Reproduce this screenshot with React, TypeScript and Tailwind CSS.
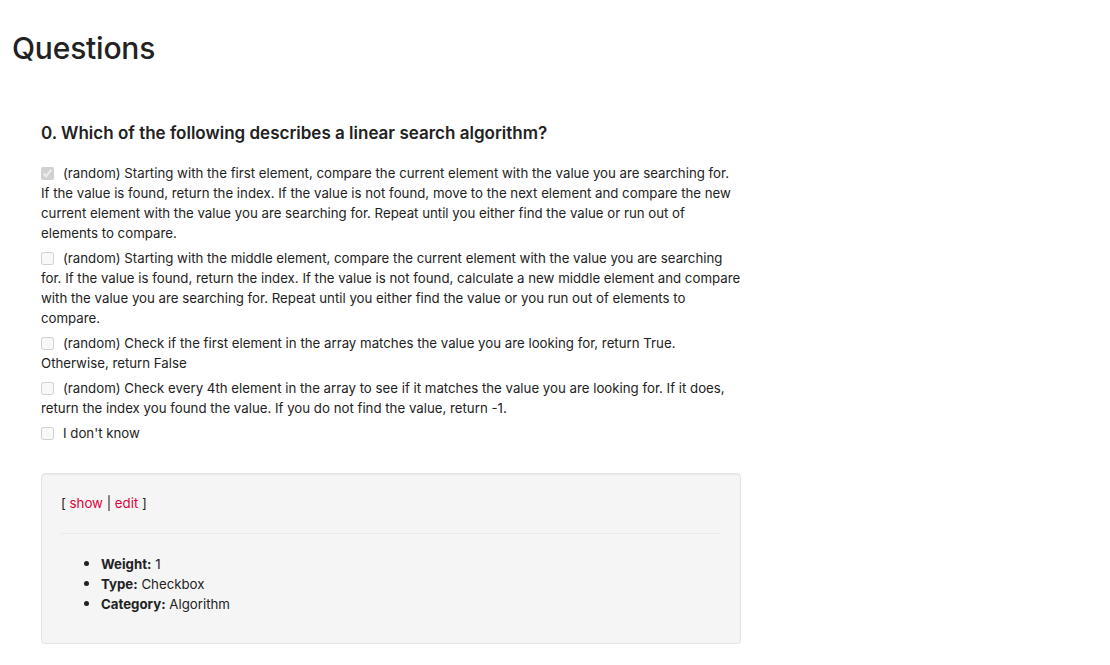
import React from 'react';

const options = [
  {
    text: '(random) Starting with the first element, compare the current element with the value you are searching for. If the value is found, return the index. If the value is not found, move to the next element and compare the new current element with the value you are searching for. Repeat until you either find the value or run out of elements to compare.',
    checked: true,
  },
  {
    text: '(random) Starting with the middle element, compare the current element with the value you are searching for. If the value is found, return the index. If the value is not found, calculate a new middle element and compare with the value you are searching for. Repeat until you either find the value or you run out of elements to compare.',
    checked: false,
  },
  {
    text: '(random) Check if the first element in the array matches the value you are looking for, return True. Otherwise, return False',
    checked: false,
  },
  {
    text: '(random) Check every 4th element in the array to see if it matches the value you are looking for. If it does, return the index you found the value. If you do not find the value, return -1.',
    checked: false,
  },
  { text: "I don't know", checked: false },
];

export default function App() {
  return (
    <div
      className="min-h-screen bg-white text-[#222]"
      style={{ fontFamily: 'Inter, "Noto Sans", sans-serif' }}
    >
      <h1 className="px-3 pt-[28px] text-[30px] font-medium leading-[40px] tracking-[-0.2px]">
        Questions
      </h1>

      <div className="ml-[41px] mt-[53px] w-[700px]">
        <h3 className="text-[17px] font-semibold leading-[24px] text-[#222]">
          0. Which of the following describes a linear search algorithm?
        </h3>

        <div className="mt-[18px] text-[13.25px] leading-[20px] text-[#222]">
          {options.map((o, i) => (
            <div key={i} className="mb-[5px]">
              <input
                type="checkbox"
                disabled
                defaultChecked={o.checked}
                className="mr-[9px] h-[13px] w-[13px] align-[-2px]"
              />
              {o.text}
            </div>
          ))}
        </div>

        <div className="mt-[30px] rounded-[4px] border border-[#e3e3e3] bg-[#f5f5f5] p-[19px] text-[13.25px] leading-[20px] shadow-[inset_0_1px_1px_rgba(0,0,0,0.05)]">
          <div>
            [ <a className="text-[#e2003b]">show</a> <span className="text-[#222]">|</span>{' '}
            <a className="text-[#e2003b]">edit</a> ]
          </div>
          <hr className="my-[20px] border-t border-[#eaeaea]" />
          <ul className="mb-[10px] list-disc pl-[40px] marker:text-[15px]">
            <li>
              <b className="font-bold">Weight:</b> 1
            </li>
            <li>
              <b className="font-bold">Type:</b> Checkbox
            </li>
            <li>
              <b className="font-bold">Category:</b> Algorithm
            </li>
          </ul>
        </div>
      </div>
    </div>
  );
}
